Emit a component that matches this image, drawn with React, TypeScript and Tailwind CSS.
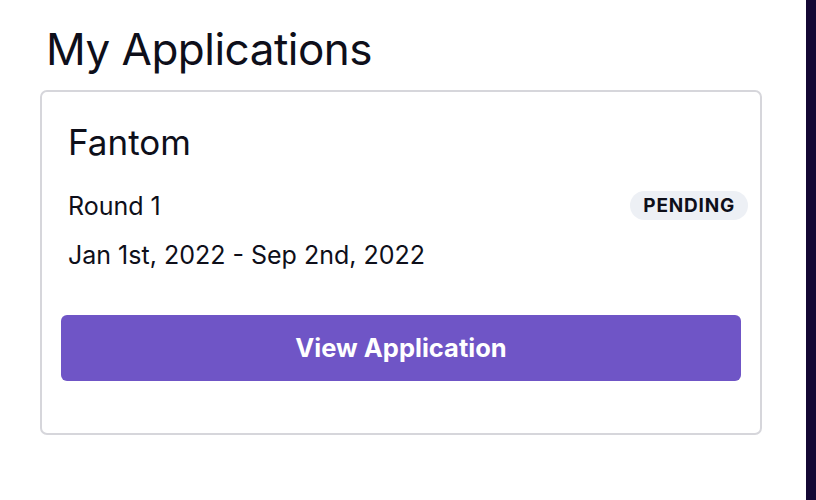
export default function App() {
  return (
    <div className="flex h-[500px] w-[816px] bg-white font-['Inter',sans-serif] text-[#0e0f1a]">
      <div className="flex-1 pl-[40px] pr-[44px]">
        {/* Header */}
        <h1 className="mt-[27px] pl-[6px] text-[44px] leading-[44px] font-normal tracking-[-0.5px]">
          My Applications
        </h1>

        {/* Card */}
        <div className="mt-[19px] h-[345px] rounded-[7px] border-2 border-[#d6d6db] px-[19px] pt-[30px]">
          <div className="px-[7px]">
            <h2 className="text-[35px] leading-[40px]">Fantom</h2>
            <div className="mt-[29px] flex items-center justify-between">
              <span className="text-[25px] leading-[28px]">Round 1</span>
              <span className="-mr-[14px] rounded-full bg-[#edf0f5] px-[13px] py-[4px] text-[19px] leading-[21px] font-bold tracking-[0.8px]">
                PENDING
              </span>
            </div>
            <p className="mt-[21px] text-[25px] leading-[28px]">Jan 1st, 2022 - Sep 2nd, 2022</p>
          </div>
          <button className="mt-[46px] flex h-[66px] w-full items-center justify-center rounded-[6px] bg-[#6f55c6] text-[25.5px] font-bold text-white">
            View Application
          </button>
        </div>
      </div>
      <div className="w-[10px] bg-[#140734]" />
    </div>
  )
}
